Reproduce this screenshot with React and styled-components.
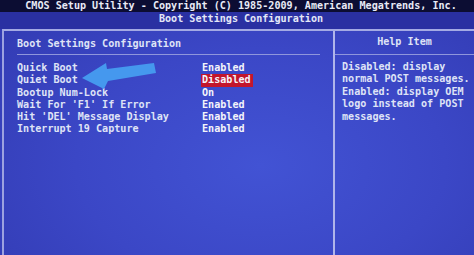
import React from 'react'
import styled, { createGlobalStyle } from 'styled-components'

const rows = [
  { label: 'Quick Boot', value: 'Enabled' },
  { label: 'Quiet Boot', value: 'Disabled', selected: true },
  { label: 'Bootup Num-Lock', value: 'On' },
  { label: "Wait For 'F1' If Error", value: 'Enabled' },
  { label: "Hit 'DEL' Message Display", value: 'Enabled' },
  { label: 'Interrupt 19 Capture', value: 'Enabled' },
]

const help = [
  'Disabled: display',
  'normal POST messages.',
  'Enabled: display OEM',
  'logo instead of POST',
  'messages.',
]

const App = () => {
  return (
    <Screen>
      <Global />
      <TopBar>CMOS Setup Utility - Copyright (C) 1985-2009, American Megatrends, Inc.</TopBar>
      <SubTitle>Boot Settings Configuration</SubTitle>
      <Main>
        <LeftPanel>
          <PanelHead>Boot Settings Configuration</PanelHead>
          <Rows>
            {rows.map((r, i) => (
              <Row key={i}>
                <Label>{r.label}</Label>
                <Value selected={r.selected}>{r.value}</Value>
              </Row>
            ))}
          </Rows>
        </LeftPanel>
        <RightPanel>
          <HelpHead>Help Item</HelpHead>
          <HelpText>
            {help.map((line, i) => (
              <div key={i}>{line}</div>
            ))}
          </HelpText>
        </RightPanel>
      </Main>
      <Arrow width="474" height="255" viewBox="0 0 474 255">
        <polygon
          points="82,78 106,63 107,69 154,63 156,73 108,81 104,89"
          fill="#4598ee"
        />
      </Arrow>
    </Screen>
  )
}

const Global = createGlobalStyle`
  body {
    margin: 0;
    background: #3a44c2;
  }
`

const Screen = styled.div`
  position: relative;
  width: 474px;
  height: 255px;
  overflow: hidden;
  font-family: 'DejaVu Sans Mono', 'Liberation Mono', monospace;
  font-weight: bold;
  font-size: 10.1px;
  color: #dfe3f6;
  background: radial-gradient(ellipse at 55% 65%, #4253d4 0%, #3b47c6 50%, #3139b0 100%);
`

const TopBar = styled.div`
  height: 12px;
  line-height: 12px;
  padding-left: 8px;
  text-align: center;
  background: #0c0d33;
  color: #e8eaf6;
  white-space: nowrap;
`

const SubTitle = styled.div`
  height: 17px;
  line-height: 13px;
  padding-left: 8px;
  text-align: center;
  background: #2a30a2;
  color: #e4e7f7;
`

const Main = styled.div`
  display: grid;
  grid-template-columns: 331px 1fr;
  height: 226px;
  margin-left: 2px;
  border-top: 2px solid #a4aae4;
  border-left: 2px solid #9ca2e0;
`

const LeftPanel = styled.div`
  border-right: 2px solid #b0b5ea;
  padding: 0 13px;
`

const PanelHead = styled.div`
  height: 23px;
  line-height: 25px;
  border-bottom: 1px solid #8f96dc;
`

const Rows = styled.div`
  padding-top: 7px;
`

const Row = styled.div`
  display: flex;
  height: 12.3px;
  line-height: 12px;
`

const Label = styled.span`
  width: 184px;
  white-space: nowrap;
`

const Value = styled.span`
  padding: 0 2px 0 1px;
  color: #f4f4fa;
  background: ${(p) => (p.selected ? '#c3162c' : 'transparent')};
`

const RightPanel = styled.div`
  display: flex;
  flex-direction: column;
`

const HelpHead = styled.div`
  height: 23px;
  line-height: 22px;
  text-align: center;
  border-bottom: 1px solid #8f96dc;
`

const HelpText = styled.div`
  padding: 6px 0 0 7px;
  line-height: 12.4px;
  white-space: nowrap;
`

const Arrow = styled.svg`
  position: absolute;
  left: 0;
  top: 0;
  pointer-events: none;
  filter: blur(0.6px);
`

export default App
